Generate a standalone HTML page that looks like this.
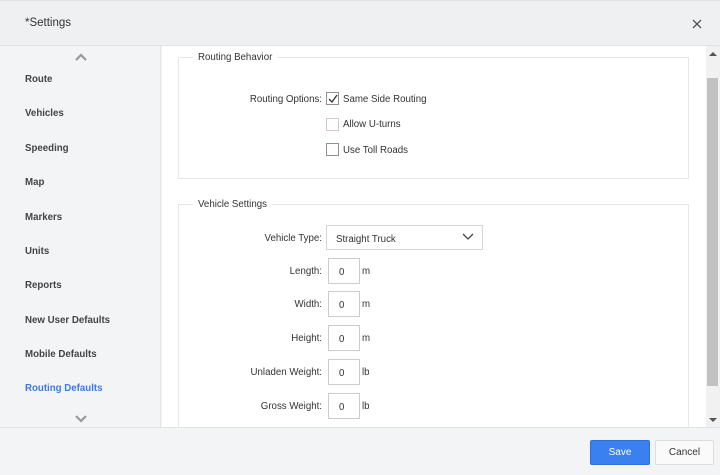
<!DOCTYPE html>
<html><head><style>
*{box-sizing:border-box;margin:0;padding:0}
body{width:720px;height:475px;font-family:"Liberation Sans",sans-serif;background:#f3f4f6;position:relative;overflow:hidden;color:#333}
.hdr{position:absolute;left:0;top:0;width:720px;height:46px;background:#eff0f2;border-bottom:1px solid #e2e3e6;border-top:1px solid #e4e4e4}
.hdr .t{position:absolute;left:25px;top:16px;font-size:11.5px;color:#333}
.x{position:absolute;left:690px;top:16px}
.side{position:absolute;left:0;top:46px;width:161px;height:381px;background:#f3f4f6;border-right:1px solid #e3e4e7}
.side div{position:absolute;left:25px;font-size:9.7px;font-weight:bold;color:#444}
.main{position:absolute;left:162px;top:46px;width:544px;height:381px;background:#fff}
.sb{position:absolute;left:706px;top:46px;width:14px;height:381px;background:#f1f1f1}
.thumb{position:absolute;left:707px;top:78px;width:11px;height:308px;background:#c1c1c1}
fieldset{position:absolute;border:1px solid #e6e6e6}
.lg{position:absolute;font-size:9.7px;background:#fff;padding:0 5px;color:#333}
.lbl{position:absolute;font-size:9.7px;color:#333;text-align:right;width:120px}
.cb{position:absolute;width:13px;height:13px;border:1px solid #9a8b96;background:#fff}
.ct{position:absolute;font-size:9.7px;color:#333}
.inp{position:absolute;width:32px;height:26px;border:1px solid #ccc;font-size:9.7px;padding:8px 0 0 10px}
.u{position:absolute;font-size:9.7px}
.ftr{position:absolute;left:0;top:427px;width:720px;height:48px;background:#f3f4f6;border-top:1px solid #e2e3e6}
</style></head><body>
<div class="hdr"><div class="t">*Settings</div>
<svg class="x" width="14" height="14" viewBox="0 0 14 14"><path d="M3 3L11 11M11 3L3 11" stroke="#555" stroke-width="1.3"/></svg></div>
<div class="side">
<svg style="position:absolute;left:74px;top:7px" width="14" height="9" viewBox="0 0 14 9"><path d="M2 7L7 2L12 7" stroke="#999" stroke-width="2.2" fill="none"/></svg>
<div style="top:28px">Route</div><div style="top:62px">Vehicles</div><div style="top:97px">Speeding</div><div style="top:131px">Map</div><div style="top:166px">Markers</div><div style="top:200px">Units</div><div style="top:234px">Reports</div><div style="top:269px">New User Defaults</div><div style="top:303px">Mobile Defaults</div><div style="top:337px;color:#3b7ae8">Routing Defaults</div>
<svg style="position:absolute;left:74px;top:368px" width="14" height="9" viewBox="0 0 14 9"><path d="M2 2L7 7L12 2" stroke="#999" stroke-width="2.2" fill="none"/></svg>
</div>
<div class="main"></div>
<fieldset style="left:178px;top:57px;width:511px;height:122px"></fieldset>
<div class="lg" style="left:193px;top:52px">Routing Behavior</div>
<div class="lbl" style="left:202px;top:94px">Routing Options:</div>
<div class="cb" style="left:326px;top:92px"></div>
<svg style="position:absolute;left:327px;top:93px" width="12" height="12" viewBox="0 0 12 12"><path d="M2 6L5 9L10 2" stroke="#333" stroke-width="1.3" fill="none"/></svg>
<div class="ct" style="left:343px;top:94px">Same Side Routing</div>
<div class="cb" style="left:326px;top:118px;border-color:#d8c6d2"></div><div class="ct" style="left:343px;top:119px">Allow U-turns</div>
<div class="cb" style="left:326px;top:143px"></div><div class="ct" style="left:343px;top:145px">Use Toll Roads</div>
<fieldset style="left:178px;top:204px;width:511px;height:240px"></fieldset>
<div class="lg" style="left:193px;top:199px">Vehicle Settings</div>
<div class="lbl" style="left:202px;top:233px">Vehicle Type:</div>
<div style="position:absolute;left:326px;top:225px;width:157px;height:25px;border:1px solid #d5d5d5;font-size:9.7px;padding:8px 0 0 9px">Straight Truck</div>
<svg style="position:absolute;left:462px;top:233px" width="12" height="8" viewBox="0 0 12 8"><path d="M1 1L6 6L11 1" stroke="#444" stroke-width="1.3" fill="none"/></svg>
<div class="lbl" style="left:202px;top:266px">Length:</div><div class="inp" style="left:328px;top:258px">0</div><div class="u" style="left:362px;top:266px">m</div>
<div class="lbl" style="left:202px;top:299px">Width:</div><div class="inp" style="left:328px;top:291px">0</div><div class="u" style="left:362px;top:299px">m</div>
<div class="lbl" style="left:202px;top:333px">Height:</div><div class="inp" style="left:328px;top:325px">0</div><div class="u" style="left:362px;top:333px">m</div>
<div class="lbl" style="left:202px;top:367px">Unladen Weight:</div><div class="inp" style="left:328px;top:359px">0</div><div class="u" style="left:362px;top:367px">lb</div>
<div class="lbl" style="left:202px;top:401px">Gross Weight:</div><div class="inp" style="left:328px;top:393px">0</div><div class="u" style="left:362px;top:401px">lb</div>
<div class="sb"></div><div class="thumb"></div>
<svg style="position:absolute;left:709px;top:51px" width="8" height="5"><path d="M0 5L4 1L8 5Z" fill="#555"/></svg>
<svg style="position:absolute;left:709px;top:418px" width="8" height="5"><path d="M0 0L4 4L8 0Z" fill="#555"/></svg>
<div class="ftr">
<div style="position:absolute;left:590px;top:12px;width:60px;height:25px;background:#3b80f0;border:1px solid #2f6fd8;border-radius:2px;color:#fff;font-size:10px;text-align:center;line-height:23px">Save</div>
<div style="position:absolute;left:655px;top:12px;width:59px;height:25px;background:#fafafa;border:1px solid #ddd;border-radius:2px;color:#333;font-size:10px;text-align:center;line-height:23px">Cancel</div>
</div>
</body></html>
